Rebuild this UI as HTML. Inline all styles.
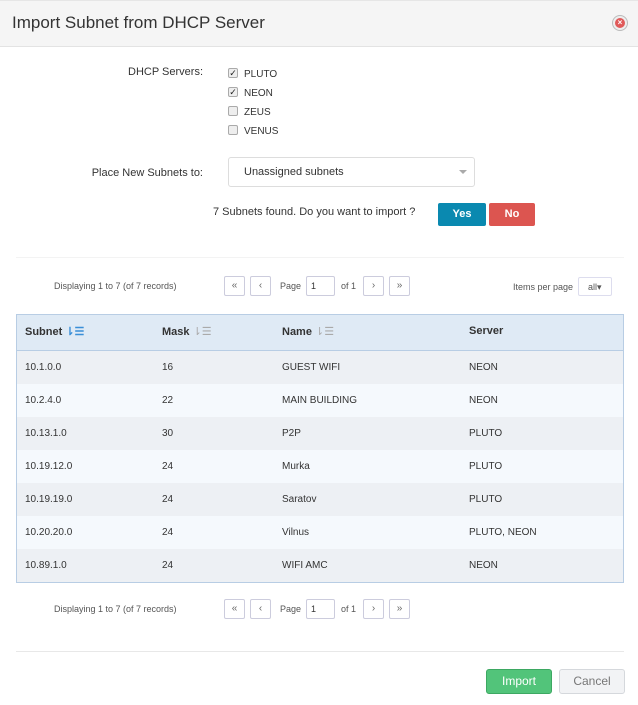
<!DOCTYPE html>
<html><head><style>
*{margin:0;padding:0;box-sizing:border-box}
body{width:638px;height:705px;background:#fff;font-family:"Liberation Sans",sans-serif;color:#333;position:relative;overflow:hidden;font-size:11px}
.a{position:absolute;white-space:nowrap}
.hdr{left:0;top:0;width:638px;height:47px;background:#f5f5f5;border-bottom:1px solid #e3e3e3;border-top:1px solid #e6e6e6}
.cb{width:10px;height:10px;border:1px solid #aaa;border-radius:2px;background:#eee;font-size:9px;line-height:8px;text-align:center;color:#222}
.pb{width:21px;height:20px;border:1px solid #ccd;border-radius:2px;background:#fff;text-align:center;line-height:18px;font-size:10px;color:#666}
.sm{font-size:9px;color:#555}
.row{left:16px;width:608px;height:33px;border-left:1px solid #b8cde4;border-right:1px solid #b8cde4}
.row span{position:absolute;top:11px;font-size:10px;color:#333}
</style></head><body>
<div class="a hdr"></div>
<div class="a" style="left:12px;top:13px;font-size:17px;color:#333">Import Subnet from DHCP Server</div>
<div class="a" style="left:613px;top:16px;width:14px;height:14px;border-radius:50%;background:#e05a5a;border:2px solid #eee;box-shadow:0 0 0 1px #bbb;color:#fff;font-size:8px;line-height:10px;text-align:center;font-weight:bold">×</div>

<div class="a" style="right:435px;top:66px">DHCP Servers:</div>
<div class="a cb" style="left:228px;top:68px">✓</div><div class="a" style="left:244px;top:69px;font-size:10px">PLUTO</div>
<div class="a cb" style="left:228px;top:87px">✓</div><div class="a" style="left:244px;top:88px;font-size:10px">NEON</div>
<div class="a cb" style="left:228px;top:106px"></div><div class="a" style="left:244px;top:107px;font-size:10px">ZEUS</div>
<div class="a cb" style="left:228px;top:125px"></div><div class="a" style="left:244px;top:126px;font-size:10px">VENUS</div>

<div class="a" style="right:435px;top:167px">Place New Subnets to:</div>
<div class="a" style="left:228px;top:157px;width:247px;height:30px;border:1px solid #ddd;border-radius:3px"></div>
<div class="a" style="left:244px;top:166px">Unassigned subnets</div>
<div class="a" style="left:459px;top:170px;border:4px solid transparent;border-top:4px solid #aaa"></div>

<div class="a" style="left:213px;top:206px">7 Subnets found. Do you want to import ?</div>
<div class="a" style="left:438px;top:203px;width:48px;height:23px;background:#0a89b0;border-radius:2px;color:#fff;text-align:center;line-height:23px;font-weight:bold">Yes</div>
<div class="a" style="left:489px;top:203px;width:46px;height:23px;background:#dc5550;border-radius:2px;color:#fff;text-align:center;line-height:23px;font-weight:bold">No</div>

<div class="a" style="left:16px;top:257px;width:608px;height:1px;background:#f3f3f3"></div>

<div class="a sm" style="left:54px;top:281px">Displaying 1 to 7 (of 7 records)</div>
<div class="a pb" style="left:224px;top:276px">«</div>
<div class="a pb" style="left:250px;top:276px">‹</div>
<div class="a sm" style="left:280px;top:281px">Page</div>
<div class="a" style="left:306px;top:276px;width:29px;height:20px;border:1px solid #ccd;border-radius:2px;font-size:9px;padding:4px 4px">1</div>
<div class="a sm" style="left:341px;top:281px">of 1</div>
<div class="a pb" style="left:363px;top:276px">›</div>
<div class="a pb" style="left:389px;top:276px">»</div>
<div class="a sm" style="left:513px;top:282px">Items per page</div>
<div class="a" style="left:578px;top:277px;width:34px;height:19px;border:1px solid #dde;border-radius:2px;font-size:9px;padding:4px 0 0 9px;color:#555">all▾</div>

<div class="a" style="left:16px;top:314px;width:608px;height:37px;background:#dfeaf5;border:1px solid #b8cde4"></div>
<div class="a" style="left:25px;top:325px;font-size:11px;font-weight:bold;color:#333">Subnet <span style="color:#3a8fd8">⇂☰</span></div>
<div class="a" style="left:162px;top:325px;font-size:11px;font-weight:bold;color:#333">Mask <span style="color:#aaa;font-weight:normal">⇂☰</span></div>
<div class="a" style="left:282px;top:325px;font-size:11px;font-weight:bold;color:#333">Name <span style="color:#aaa;font-weight:normal">⇂☰</span></div>
<div class="a" style="left:469px;top:325px;font-size:11px;font-weight:bold;color:#333">Server</div>

<div class="a row" style="top:351px;background:#edf0f4"><span style="left:8px">10.1.0.0</span><span style="left:145px">16</span><span style="left:265px">GUEST WIFI</span><span style="left:452px">NEON</span></div>
<div class="a row" style="top:384px;background:#f5f9fd"><span style="left:8px">10.2.4.0</span><span style="left:145px">22</span><span style="left:265px">MAIN BUILDING</span><span style="left:452px">NEON</span></div>
<div class="a row" style="top:417px;background:#edf0f4"><span style="left:8px">10.13.1.0</span><span style="left:145px">30</span><span style="left:265px">P2P</span><span style="left:452px">PLUTO</span></div>
<div class="a row" style="top:450px;background:#f5f9fd"><span style="left:8px">10.19.12.0</span><span style="left:145px">24</span><span style="left:265px">Murka</span><span style="left:452px">PLUTO</span></div>
<div class="a row" style="top:483px;background:#edf0f4"><span style="left:8px">10.19.19.0</span><span style="left:145px">24</span><span style="left:265px">Saratov</span><span style="left:452px">PLUTO</span></div>
<div class="a row" style="top:516px;background:#f5f9fd"><span style="left:8px">10.20.20.0</span><span style="left:145px">24</span><span style="left:265px">Vilnus</span><span style="left:452px">PLUTO, NEON</span></div>
<div class="a row" style="top:549px;background:#edf0f4;border-bottom:1px solid #b8cde4;height:34px"><span style="left:8px">10.89.1.0</span><span style="left:145px">24</span><span style="left:265px">WIFI AMC</span><span style="left:452px">NEON</span></div>

<div class="a sm" style="left:54px;top:604px">Displaying 1 to 7 (of 7 records)</div>
<div class="a pb" style="left:224px;top:599px">«</div>
<div class="a pb" style="left:250px;top:599px">‹</div>
<div class="a sm" style="left:280px;top:604px">Page</div>
<div class="a" style="left:306px;top:599px;width:29px;height:20px;border:1px solid #ccd;border-radius:2px;font-size:9px;padding:4px 4px">1</div>
<div class="a sm" style="left:341px;top:604px">of 1</div>
<div class="a pb" style="left:363px;top:599px">›</div>
<div class="a pb" style="left:389px;top:599px">»</div>

<div class="a" style="left:16px;top:651px;width:608px;height:1px;background:#e8e8e8"></div>
<div class="a" style="left:486px;top:669px;width:66px;height:25px;background:#52c47a;border:1px solid #3da862;border-radius:3px;color:#fff;text-align:center;line-height:23px;font-size:12px">Import</div>
<div class="a" style="left:559px;top:669px;width:66px;height:25px;background:#f2f3f5;border:1px solid #d5d8dc;border-radius:3px;color:#777;text-align:center;line-height:23px;font-size:12px">Cancel</div>
</body></html>
